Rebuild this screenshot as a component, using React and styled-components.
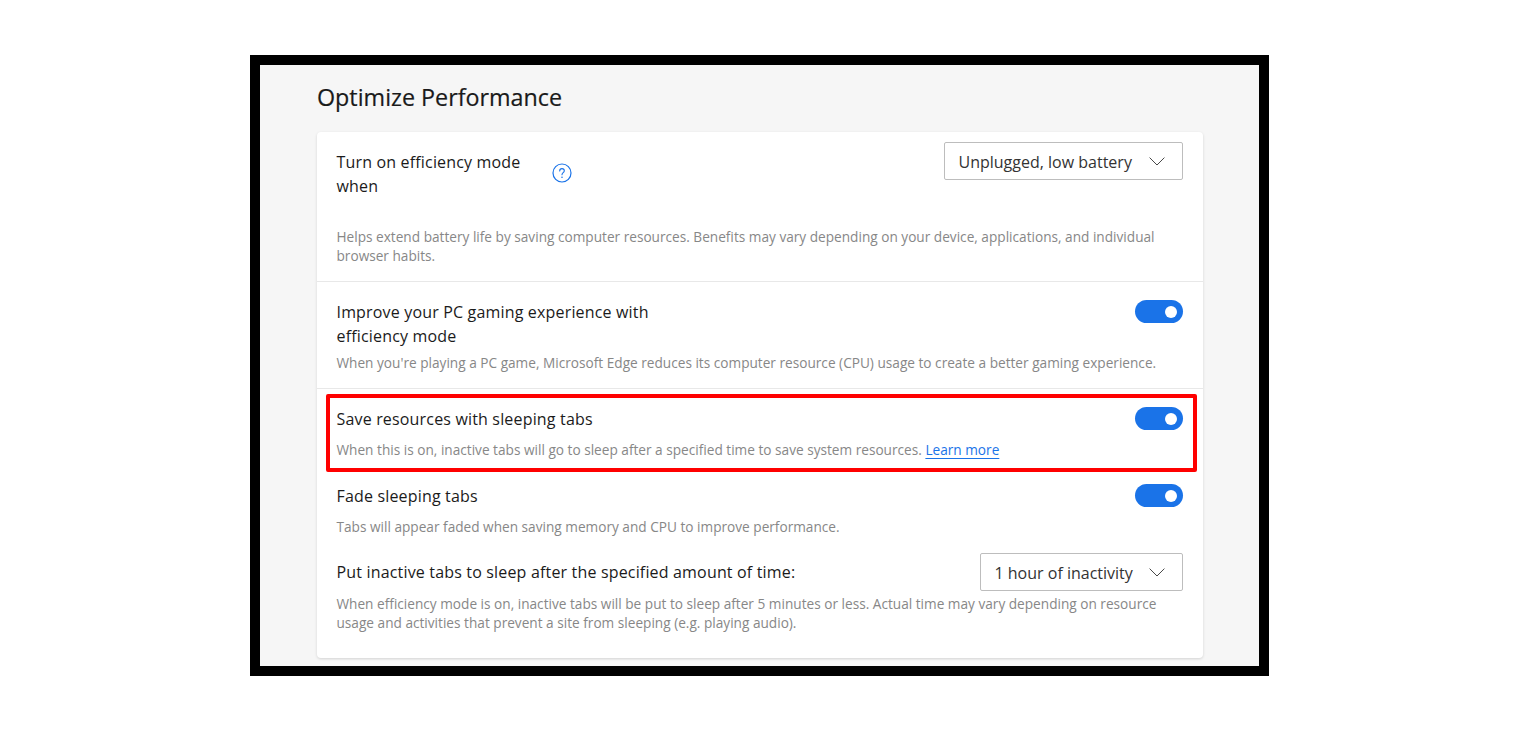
import styled, { createGlobalStyle } from "styled-components";

const GlobalStyle = createGlobalStyle`
  html, body {
    margin: 0;
    background: #fff;
  }
  body {
    font-family: "Open Sans", "Noto Sans", sans-serif;
  }
`;

const Page = styled.div`
  width: 1519px;
  height: 731px;
  padding-top: 55px;
  box-sizing: border-box;
  display: flex;
  justify-content: center;
  align-items: flex-start;
`;

const Frame = styled.div`
  width: 1019px;
  height: 621px;
  box-sizing: border-box;
  border: 10px solid #000;
  background: #f6f6f6;
  padding: 0 56px 0 57px;
  overflow: hidden;
`;

const Heading = styled.h1`
  margin: 0;
  height: 67px;
  padding-top: 15px;
  box-sizing: border-box;
  font-size: 23.3px;
  line-height: 34px;
  font-weight: 400;
  color: #1a1a1a;
  -webkit-text-stroke: 0.2px #1a1a1a;
`;

const Card = styled.div`
  position: relative;
  height: 526px;
  box-sizing: border-box;
  background: #fff;
  border-radius: 4px;
  box-shadow: 0 1px 3px rgba(0, 0, 0, 0.14);
`;

const Section = styled.div`
  box-sizing: border-box;
  height: ${(p) => p.$height}px;
  padding: ${(p) => p.$pad}px 20px 0 19.5px;
  border-bottom: ${(p) => (p.$divider ? "1px solid #e8e8e8" : "none")};
`;

const Row = styled.div`
  display: flex;
  justify-content: space-between;
  align-items: flex-start;
`;

const TitleGroup = styled.div`
  display: flex;
  align-items: center;
`;

const Title = styled.div`
  width: ${(p) => (p.$width ? `${p.$width}px` : "auto")};
  padding-top: ${(p) => p.$top || 0}px;
  font-size: 16px;
  letter-spacing: 0.17px;
  line-height: 24px;
  color: #1b1b1b;
`;

const Help = styled.svg`
  width: 20px;
  height: 20px;
  margin-left: 5.5px;
  margin-top: 6px;
  flex: none;
`;

const Desc = styled.p`
  margin: ${(p) => p.$top}px 0 0;
  max-width: 830px;
  font-size: 13.65px;
  line-height: 19px;
  color: #878787;
`;

const DocLink = styled.a`
  color: #1a73e8;
  text-decoration: underline;
  text-underline-offset: 3px;
`;

const Select = styled.div`
  display: flex;
  align-items: center;
  justify-content: space-between;
  box-sizing: border-box;
  width: ${(p) => p.$width}px;
  height: 38px;
  padding: 1px 17px 0 13.5px;
  border: 1px solid #bdbdbd;
  border-radius: 2px;
  background: #fff;
  font-size: 16px;
  color: #333;
`;

const Chevron = styled.svg`
  width: 16px;
  height: 9px;
  flex: none;
`;

const Toggle = styled.div`
  position: relative;
  width: 48px;
  height: 23px;
  border-radius: 12px;
  background: #1a73e8;
  flex: none;
  &::after {
    content: "";
    position: absolute;
    top: 6px;
    right: 6px;
    width: 12px;
    height: 12px;
    border-radius: 50%;
    background: #fff;
  }
`;

const Highlight = styled.div`
  position: absolute;
  left: 9px;
  top: 262px;
  width: 871px;
  height: 78px;
  box-sizing: border-box;
  border: 4px solid #ff0000;
  border-radius: 2px;
  pointer-events: none;
`;

const Caret = () => (
  <Chevron viewBox="0 0 16 9" fill="none">
    <path d="M.6.6 8 8 15.4.6" stroke="#333" strokeWidth="0.9" />
  </Chevron>
);

export default function App() {
  return (
    <Page>
      <GlobalStyle />
      <Frame>
        <Heading>Optimize Performance</Heading>
        <Card>
          <Section $height={150} $pad={10} $divider>
            <Row>
              <TitleGroup>
                <Title $width={210} $top={8}>Turn on efficiency mode when</Title>
                <Help viewBox="0 0 20 20" fill="none">
                  <circle cx="10" cy="10" r="9" stroke="#1a73e8" strokeWidth="1.2" />
                  <path
                    d="M7.7 7.9c0-1.4 1-2.3 2.3-2.3s2.3.9 2.3 2.1c0 1.9-2.3 2-2.3 4"
                    stroke="#1a73e8"
                    strokeWidth="1.1"
                    strokeLinecap="round"
                  />
                  <circle cx="10" cy="14.3" r="0.8" fill="#1a73e8" />
                </Help>
              </TitleGroup>
              <Select $width={239}>
                Unplugged, low battery
                <Caret />
              </Select>
            </Row>
            <Desc $top={29}>
              Helps extend battery life by saving computer resources. Benefits may vary depending on your device,
              applications, and individual browser habits.
            </Desc>
          </Section>
          <Section $height={107} $pad={18} $divider>
            <Row>
              <Title $width={330}>Improve your PC gaming experience with efficiency mode</Title>
              <Toggle />
            </Row>
            <Desc $top={5}>
              When you're playing a PC game, Microsoft Edge reduces its computer resource (CPU) usage to create a
              better gaming experience.
            </Desc>
          </Section>
          <Section $height={77} $pad={18}>
            <Row>
              <Title>Save resources with sleeping tabs</Title>
              <Toggle />
            </Row>
            <Desc $top={9}>
              When this is on, inactive tabs will go to sleep after a specified time to save system resources.{" "}
              <DocLink href="#">Learn more</DocLink>
            </Desc>
          </Section>
          <Section $height={65} $pad={18}>
            <Row>
              <Title>Fade sleeping tabs</Title>
              <Toggle />
            </Row>
            <Desc $top={9}>Tabs will appear faded when saving memory and CPU to improve performance.</Desc>
          </Section>
          <Section $height={127} $pad={22}>
            <Row>
              <Title $top={7}>Put inactive tabs to sleep after the specified amount of time:</Title>
              <Select $width={203}>
                1 hour of inactivity
                <Caret />
              </Select>
            </Row>
            <Desc $top={3}>
              When efficiency mode is on, inactive tabs will be put to sleep after 5 minutes or less. Actual time may
              vary depending on resource usage and activities that prevent a site from sleeping (e.g. playing audio).
            </Desc>
          </Section>
          <Highlight />
        </Card>
      </Frame>
    </Page>
  );
}
